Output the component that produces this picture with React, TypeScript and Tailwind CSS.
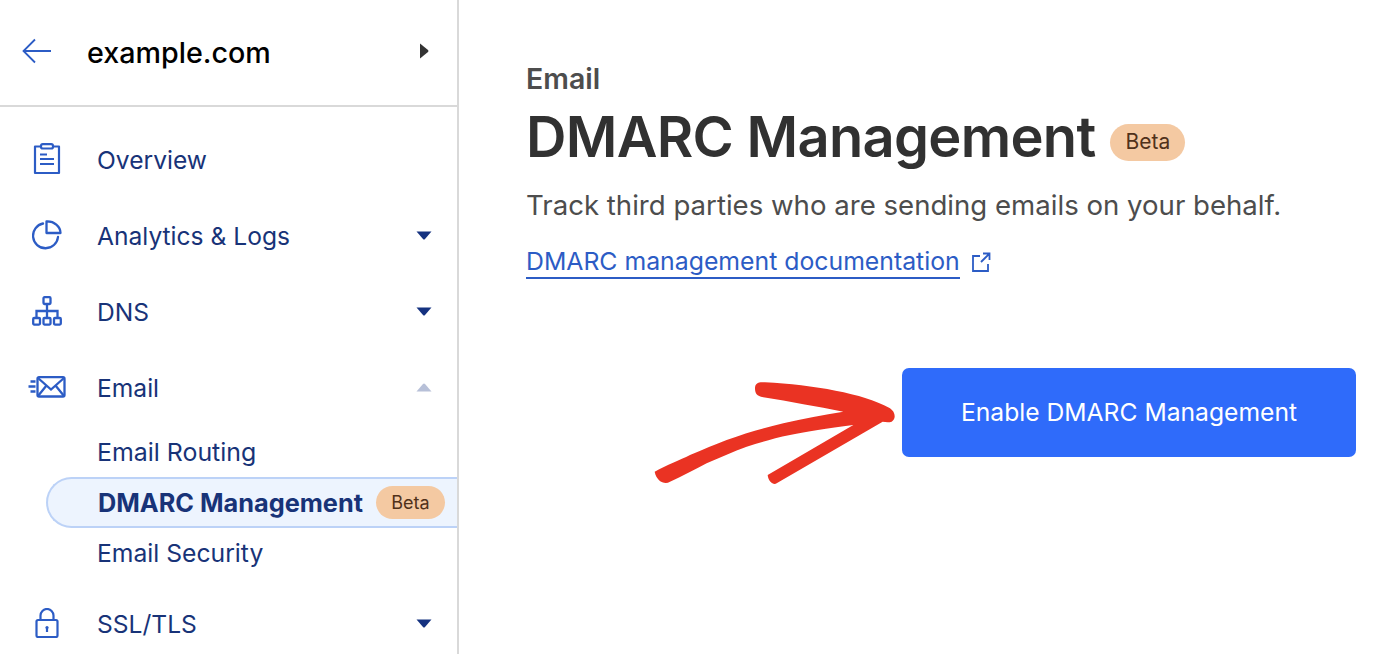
import type { ReactNode } from 'react';

function Caret({ up = false }: { up?: boolean }) {
  return (
    <svg width="16" height="9" viewBox="0 0 16 9" className={up ? 'rotate-180 opacity-30' : ''}>
      <path d="M0.5 0.5h15L9 8q-1 1-2 0z" fill="#153280" />
    </svg>
  );
}

function ClipboardIcon() {
  return (
    <svg width="28" height="32" viewBox="0 0 28 32" fill="none" stroke="#2c5cc5" strokeWidth="2.200">
      <path d="M8 3.500H2v26.500h24V3.500h-6" strokeLinejoin="round" />
      <rect x="8" y="1.200" width="12" height="4.300" rx="1.800" />
      <path d="M7 11.500h7M7 16h14M7 21h14" />
    </svg>
  );
}

function PieIcon() {
  return (
    <svg width="30" height="30" viewBox="0 0 30 30" fill="none" stroke="#2c5cc5" strokeWidth="2.300">
      <path d="M11 3.500A12.500 12.500 0 1 0 26 17" strokeLinecap="round" />
      <path d="M14.500 1.500V13H28.500C28.500 6.500 22 1 14.500 1.500z" strokeLinejoin="round" />
    </svg>
  );
}

function NetworkIcon() {
  return (
    <svg width="30" height="30" viewBox="0 0 30 30" fill="none" stroke="#2c5cc5" strokeWidth="2.300">
      <rect x="11.500" y="1.200" width="7" height="6.800" rx="1" />
      <path d="M15 8v14M4.500 22v-7h21v7" />
      <rect x="1.200" y="22" width="6.800" height="6.600" rx="1" />
      <rect x="11.500" y="22" width="7" height="6.600" rx="1" />
      <rect x="22" y="22" width="6.800" height="6.600" rx="1" />
    </svg>
  );
}

function MailIcon() {
  return (
    <svg width="38" height="22" viewBox="0 0 38 22" fill="none" stroke="#2c5cc5" strokeWidth="2.300">
      <rect x="9.500" y="1.200" width="27" height="19.300" rx="1.500" />
      <path d="M10 2l13 11.500L36 2M10 20l8.500-10.500M36 20l-8.500-10.500" />
      <path d="M2.500 5.500h5M0.500 10.500h7M2.500 15.500h5" />
    </svg>
  );
}

function LockIcon() {
  return (
    <svg width="24" height="30" viewBox="0 0 24 30" fill="none" stroke="#2c5cc5" strokeWidth="2.200">
      <rect x="1.500" y="12" width="21" height="17" rx="1.500" />
      <path d="M5.500 12V7.500a6.500 6.500 0 0 1 13 0V12" />
      <circle cx="12" cy="19.500" r="1.600" fill="#2c5cc5" stroke="none" />
      <path d="M12 20v4" />
    </svg>
  );
}

function NavRow({ icon, label, caret }: { icon: ReactNode; label: string; caret?: 'up' | 'down' }) {
  return (
    <div className="flex h-[76px] items-center pr-[25px]">
      <div className="flex w-[97px] shrink-0 justify-center pr-[4px] pb-[3px]">{icon}</div>
      <span className="flex-1 text-[24.600px] text-[#183378]">{label}</span>
      {caret && (
        <div className="pb-[1px]">
          <Caret up={caret === 'up'} />
        </div>
      )}
    </div>
  );
}

function Beta({ className }: { className: string }) {
  return (
    <span className={`flex items-center justify-center rounded-full bg-[#f4c9a2] text-[#50311a] ${className}`}>
      Beta
    </span>
  );
}

export default function App() {
  return (
    <div className="relative flex h-[654px] w-[1400px] overflow-hidden bg-white font-['Inter',sans-serif]">
      <aside className="w-[459px] shrink-0 border-r-2 border-[#d9d9d9]">
        {/* Zone header */}
        <div className="flex h-[107px] items-center border-b-2 border-[#d9d9d9] pr-[28px] pl-[22px]">
          <svg width="30" height="26" viewBox="0 0 30 26" fill="none" stroke="#2c5cc5" strokeWidth="1.800" className="mb-[3px]">
            <path d="M13 1.500L1.500 13 13 24.500M1.500 13H29" />
          </svg>
          <span className="ml-[35px] flex-1 text-[28.700px] font-medium text-black">example.com</span>
          <svg width="10" height="16" viewBox="0 0 10 16" className="mb-[3px]">
            <path d="M1 0.500v15l8-6.500q1-1 0-2z" fill="#333333" />
          </svg>
        </div>

        <nav className="pt-[15px]">
          <NavRow icon={<ClipboardIcon />} label="Overview" />
          <NavRow icon={<PieIcon />} label="Analytics & Logs" caret="down" />
          <NavRow icon={<NetworkIcon />} label="DNS" caret="down" />
          <NavRow icon={<MailIcon />} label="Email" caret="up" />

          {/* Email sub menu */}
          <div className="mt-[1px] text-[24.700px] text-[#183378]">
            <div className="flex h-[50px] items-center pt-[2px] pl-[97px] text-[24.900px]">Email Routing</div>
            <div className="ml-[46px] flex h-[51px] items-center rounded-l-full border-y-2 border-l-2 border-[#bcd2f7] bg-[#edf4fe] pl-[50px]">
              <span className="text-[25.300px] font-bold">DMARC Management</span>
              <Beta className="ml-[13px] h-[33px] w-[69px] text-[18px]" />
            </div>
            <div className="flex h-[51px] items-center pl-[97px]">Email Security</div>
          </div>

          <div className="mt-[7px]">
            <NavRow icon={<LockIcon />} label="SSL/TLS" caret="down" />
          </div>
        </nav>
      </aside>

      <main className="flex-1 pt-[60px] pr-[44px] pl-[67px]">
        <div className="text-[28.500px] leading-[38px] font-semibold text-[#4d4d4d]">Email</div>
        <div className="mt-[3px] flex items-center">
          <h1 className="text-[56px] leading-[72px] font-semibold tracking-[-0.7px] text-[#313131]">DMARC Management</h1>
          <Beta className="mt-[10px] ml-[15px] h-[37px] w-[75px] text-[21px]" />
        </div>
        <p className="mt-[12px] text-[27.600px] leading-[40px] text-[#4d4d4d]">
          Track third parties who are sending emails on your behalf.
        </p>
        <div className="mt-[20px] flex items-center">
          <a className="border-b-2 border-[#2c5cc5] text-[24.800px] leading-[32px] text-[#2c5cc5]">
            DMARC management documentation
          </a>
          <svg width="20" height="20" viewBox="0 0 20 20" fill="none" stroke="#2c5cc5" strokeWidth="1.800" className="ml-[11px]">
            <path d="M9 4H2v15h15v-7M10 10l8-8M12 1.500h6.500V8" />
          </svg>
        </div>
        <div className="mt-[89px] flex justify-end">
          <button className="flex h-[89px] w-[454px] items-center justify-center rounded-[7px] bg-[#2f6bfa] text-[24.660px] text-white">
            Enable DMARC Management
          </button>
        </div>
      </main>

      {/* Annotation arrow */}
      <svg className="absolute top-[360px] left-[640px]" width="300" height="140" viewBox="0 0 900 420">
        <path
          d="M345 85C345 70 355 65 375 67C520 75 670 100 750 145C765 155 770 175 755 185C745 188 735 186 728 185L410 370C400 376 385 365 383 345L640 195C560 205 500 215 450 225C400 235 360 248 320 260C280 275 240 292 200 310C165 328 125 350 90 365C75 375 50 365 44 335C80 315 120 300 150 285C190 268 225 254 260 240C320 218 370 204 430 190C490 175 550 165 610 155C530 140 450 125 370 112C350 108 345 100 345 85Z"
          fill="#ea3323"
        />
      </svg>
    </div>
  );
}
